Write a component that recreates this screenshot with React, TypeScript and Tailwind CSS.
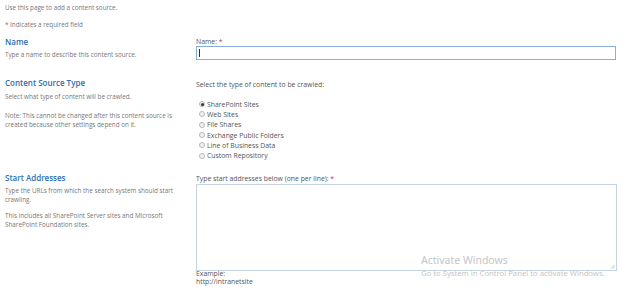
const font = "font-['Open_Sans','Liberation_Sans',sans-serif]";

function Radio({ label, checked }: { label: string; checked?: boolean }) {
  return (
    <div className="flex items-center h-[10.3px]">
      <span className="w-[6px] h-[6px] rounded-full border border-[#b8b8b8] bg-[#f2f2f2] flex items-center justify-center ml-[3px] mr-[2px] shrink-0">
        {checked && <span className="w-[3px] h-[3px] rounded-full bg-[#333]" />}
      </span>
      <span className="text-[#555]">{label}</span>
    </div>
  );
}

function Heading({ children }: { children: React.ReactNode }) {
  return <div className="text-[8px] leading-[11px] font-semibold text-[#2d6db3]">{children}</div>;
}

export default function App() {
  return (
    <div className={`w-[623px] h-[294px] bg-white overflow-hidden relative ${font} text-[6.3px] leading-[9px] text-[#777]`}>
      <div className="pl-[5px] pt-[3px]">Use this page to add a content source.</div>
      <div className="pl-[5px] mt-[8px]">* Indicates a required field</div>

      {/* Name */}
      <div className="flex mt-[7px]">
        <div className="w-[196px] pl-[5px] shrink-0">
          <Heading>Name</Heading>
          <div className="mt-[3px] w-[175px]">Type a name to describe this content source.</div>
        </div>
        <div className="flex-1 pr-[7px] text-[6.85px] leading-[9px]">
          <div className="text-[#555] pt-px">Name: <span className="text-[#c33]">*</span></div>
          <div className="h-[14px] border border-[#86b0db] flex items-center pl-[2px]">
            <span className="w-px h-[8px] bg-[#333]" />
          </div>
        </div>
      </div>

      {/* Content Source Type */}
      <div className="flex mt-[17px]">
        <div className="w-[196px] pl-[5px] shrink-0">
          <Heading>Content Source Type</Heading>
          <div className="mt-[4px] w-[175px]">Select what type of content will be crawled.</div>
          <div className="mt-[10px] w-[175px]">Note: This cannot be changed after this content source is created because other settings depend on it.</div>
        </div>
        <div className="flex-1 pr-[7px] pt-[3px] text-[6.85px] leading-[9px]">
          <div className="text-[#555]">Select the type of content to be crawled:</div>
          <div className="mt-[10px] flex flex-col">
            <Radio label="SharePoint Sites" checked />
            <Radio label="Web Sites" />
            <Radio label="File Shares" />
            <Radio label="Exchange Public Folders" />
            <Radio label="Line of Business Data" />
            <Radio label="Custom Repository" />
          </div>
        </div>
      </div>

      {/* Start Addresses */}
      <div className="flex mt-[11px]">
        <div className="w-[196px] pl-[5px] shrink-0">
          <Heading>Start Addresses</Heading>
          <div className="mt-[3px] w-[175px]">Type the URLs from which the search system should start crawling.</div>
          <div className="mt-[7px] w-[175px]">This includes all SharePoint Server sites and Microsoft SharePoint Foundation sites.</div>
        </div>
        <div className="flex-1 pr-[6px] pt-[2px] text-[6.85px] leading-[9px]">
          <div className="text-[#555]">Type start addresses below (one per line): <span className="text-[#c33]">*</span></div>
          <div className="h-[87px] mt-px border border-[#c6d4e2] relative">
            <svg className="absolute right-[1px] bottom-[1px]" width="5" height="5" viewBox="0 0 5 5">
              <path d="M4.5 1 L1 4.5 M4.5 3 L3 4.5" stroke="#aaa" strokeWidth="0.7" />
            </svg>
          </div>
          <div className="text-[#555] leading-[8px] -mt-px">Example:</div>
          <div className="text-[#555] leading-[8px]">http://intranetsite</div>
        </div>
      </div>

      {/* Activate Windows watermark */}
      <div className="absolute left-[421px] top-[253px] text-[#c6c6c6] font-['Noto_Sans','Open_Sans',sans-serif]">
        <div className="text-[10.5px] leading-[14px]">Activate Windows</div>
        <div className="text-[7.7px] leading-[9px] mt-[2px]">Go to System in Control Panel to activate Windows.</div>
      </div>
    </div>
  );
}
